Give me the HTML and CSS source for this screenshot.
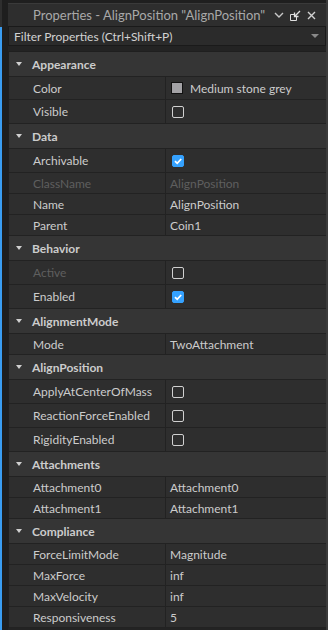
FILE: index.html
```html
<!DOCTYPE html>
<html>
<head>
<meta charset="utf-8">
<link rel="stylesheet" href="styles.css">
</head>
<body>
<div class="app">
  <div class="leftbar"><div class="accent"></div></div>
  <div class="panel">
    <div class="titlebar">
      <span class="title">Properties - AlignPosition "AlignPosition"</span>
      <div class="ticons">
        <svg width="10" height="10" viewBox="0 0 10 10"><path d="M1 3 L5 7 L9 3" fill="none" stroke="#c8c8c8" stroke-width="1.4"/></svg>
        <svg width="11" height="11" viewBox="0 0 11 11"><path d="M0.5 4.5 H4 M0.5 4.5 V10.5 H6.5 V7" fill="none" stroke="#e0e0e0" stroke-width="1"/><path d="M10 1 L4.5 6.5 M4.5 2.5 V6.5 H8.5" fill="none" stroke="#e0e0e0" stroke-width="1.3"/></svg>
        <svg width="9" height="9" viewBox="0 0 9 9"><path d="M1 1 L8 8 M8 1 L1 8" fill="none" stroke="#d0d0d0" stroke-width="1.4"/></svg>
      </div>
    </div>
    <div class="filter">
      <span>Filter Properties (Ctrl+Shift+P)</span>
      <span class="ddarrow"></span>
    </div>
    <div class="gap"></div>
    <div class="list">
      <div class="hdr"><span class="tri"></span>Appearance</div>
      <div class="row r23"><div class="k">Color</div><div class="v"><span class="swatch"></span>Medium stone grey</div></div>
      <div class="row r24"><div class="k">Visible</div><div class="v"><span class="cb"></span></div></div>

      <div class="hdr"><span class="tri"></span>Data</div>
      <div class="row r24"><div class="k">Archivable</div><div class="v"><span class="cb on"><svg width="12" height="12" viewBox="0 0 12 12"><path d="M3 6.2 L5.2 8.3 L9.2 4" fill="none" stroke="#fff" stroke-width="1.8"/></svg></span></div></div>
      <div class="row"><div class="k dis">ClassName</div><div class="v dis">AlignPosition</div></div>
      <div class="row"><div class="k">Name</div><div class="v">AlignPosition</div></div>
      <div class="row"><div class="k">Parent</div><div class="v">Coin1</div></div>

      <div class="hdr"><span class="tri"></span>Behavior</div>
      <div class="row r24"><div class="k dis">Active</div><div class="v"><span class="cb"></span></div></div>
      <div class="row r24"><div class="k">Enabled</div><div class="v"><span class="cb on"><svg width="12" height="12" viewBox="0 0 12 12"><path d="M3 6.2 L5.2 8.3 L9.2 4" fill="none" stroke="#fff" stroke-width="1.8"/></svg></span></div></div>

      <div class="hdr"><span class="tri"></span>AlignmentMode</div>
      <div class="row"><div class="k">Mode</div><div class="v">TwoAttachment</div></div>

      <div class="hdr"><span class="tri"></span>AlignPosition</div>
      <div class="row r24"><div class="k">ApplyAtCenterOfMass</div><div class="v"><span class="cb"></span></div></div>
      <div class="row r24"><div class="k">ReactionForceEnabled</div><div class="v"><span class="cb"></span></div></div>
      <div class="row r24"><div class="k">RigidityEnabled</div><div class="v"><span class="cb"></span></div></div>

      <div class="hdr"><span class="tri"></span>Attachments</div>
      <div class="row"><div class="k">Attachment0</div><div class="v">Attachment0</div></div>
      <div class="row"><div class="k">Attachment1</div><div class="v">Attachment1</div></div>

      <div class="hdr"><span class="tri"></span>Compliance</div>
      <div class="row"><div class="k">ForceLimitMode</div><div class="v">Magnitude</div></div>
      <div class="row"><div class="k">MaxForce</div><div class="v">inf</div></div>
      <div class="row"><div class="k">MaxVelocity</div><div class="v">inf</div></div>
      <div class="row"><div class="k">Responsiveness</div><div class="v">5</div></div>
    </div>
  </div>
  <div class="rightbar"></div>
</div>
</body>
</html>
```
FILE: styles.css
```css
* { box-sizing: border-box; }
html, body { margin: 0; padding: 0; }
body {
  background: #1f1f1f;
  font-family: Lato, "Liberation Sans", sans-serif;
  font-size: 12px;
  color: #cccccc;
  width: 328px;
  height: 630px;
  overflow: hidden;
}
.app { display: flex; height: 630px; }
.leftbar { width: 8px; background: #1e1e1e; display: flex; }
.accent {
  width: 2px;
  background: linear-gradient(#2e2e2e 0 27px, #3a9df2 27px 100%);
}
.panel {
  flex: 1;
  display: flex;
  flex-direction: column;
  margin-top: 3px;
  background: #232323;
  overflow: hidden;
}
.titlebar {
  height: 23px;
  flex: none;
  background: #2e2e2e;
  border-top: 1px solid #3a3a3a;
  display: flex;
  align-items: center;
  padding-left: 25px;
  padding-right: 10px;
}
.title { color: #a9a9a9; font-size: 13px; flex: 1; white-space: nowrap; }
.ticons { display: flex; align-items: center; gap: 6px; }
.ticons svg { display: block; }
.filter {
  height: 20px;
  flex: none;
  background: #2b2b2b;
  border: 1px solid #1a1a1a;
  display: flex;
  align-items: center;
  padding-left: 5px;
  padding-right: 6px;
  color: #d2d2d2;
}
.filter span:first-child { flex: 1; }
.ddarrow {
  width: 0; height: 0;
  border-left: 4px solid transparent;
  border-right: 4px solid transparent;
  border-top: 4px solid #8a8a8a;
}
.gap { height: 5px; flex: none; background: #232323; }
.list { border-top: 1px solid #1f1f1f; border-left: 1px solid #1f1f1f; }
.hdr {
  height: 25px;
  background: #353535;
  border-bottom: 1px solid #222222;
  display: flex;
  align-items: center;
  font-weight: bold;
  color: #cccccc;
  padding-left: 7px;
}
.tri {
  width: 0; height: 0;
  border-left: 3.5px solid transparent;
  border-right: 3.5px solid transparent;
  border-top: 4px solid #d0d0d0;
  margin-right: 10px;
}
.row {
  height: 21px;
  display: grid;
  grid-template-columns: 157px 1fr;
  background: #2e2e2e;
  border-bottom: 1px solid #222222;
}
.row.r23 { height: 23px; }
.row.r24 { height: 24px; }
.k {
  display: flex; align-items: center;
  padding-left: 24px;
  border-right: 1px solid #222222;
}
.v {
  display: flex; align-items: center;
  padding-left: 4px;
}
.dis { color: #5f5f5f; }
.swatch {
  width: 12px; height: 12px;
  background: #a3a2a5;
  border: 1px solid #111;
  margin-left: 1px;
  margin-right: 7px;
}
.cb {
  width: 12px; height: 12px;
  border: 1px solid #d0d0d0;
  border-radius: 2px;
  margin-left: 2px;
  display: flex;
  align-items: center;
  justify-content: center;
}
.cb.on { background: #35a2ff; border-color: #35a2ff; }
.cb svg { display: block; flex: none; }
.rightbar { width: 2px; background: #3b3b3b; }
```
